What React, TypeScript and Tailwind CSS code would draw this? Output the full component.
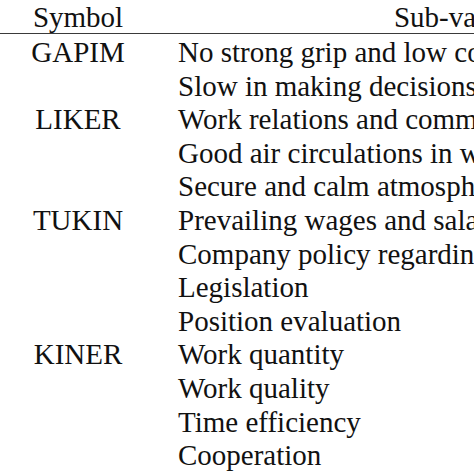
const filas: { simbolo: string; sub: string }[] = [
  { simbolo: 'GAPIM', sub: 'No strong grip and low commitment' },
  { simbolo: '', sub: 'Slow in making decisions' },
  { simbolo: 'LIKER', sub: 'Work relations and communication' },
  { simbolo: '', sub: 'Good air circulations in workplace' },
  { simbolo: '', sub: 'Secure and calm atmosphere' },
  { simbolo: 'TUKIN', sub: 'Prevailing wages and salaries' },
  { simbolo: '', sub: 'Company policy regarding wages' },
  { simbolo: '', sub: 'Legislation' },
  { simbolo: '', sub: 'Position evaluation' },
  { simbolo: 'KINER', sub: 'Work quantity' },
  { simbolo: '', sub: 'Work quality' },
  { simbolo: '', sub: 'Time efficiency' },
  { simbolo: '', sub: 'Cooperation' },
];

const App = () => {
  return (
    <div
      className="w-[474px] h-[474px] overflow-hidden bg-white text-[#111] text-[29px] leading-[33.6px]"
      style={{ fontFamily: '"Liberation Serif", "Times New Roman", serif' }}
    >
      <div className="w-[780px]">
        <div className="grid grid-cols-[156px_580px] gap-x-[22px] h-[34px] pt-[1px] border-b-[1.5px] border-[#3a3a3a]">
          <div className="text-center">Symbol</div>
          <div className="text-center">Sub-variable</div>
        </div>

        <div className="grid grid-cols-[156px_580px] gap-x-[22px] mt-[2px]">
          {filas.map((fila, i) => (
            <div key={i} className="contents">
              <div className="text-center whitespace-nowrap">{fila.simbolo}</div>
              <div className="text-left whitespace-nowrap">{fila.sub}</div>
            </div>
          ))}
        </div>
      </div>
    </div>
  );
};

export default App;
